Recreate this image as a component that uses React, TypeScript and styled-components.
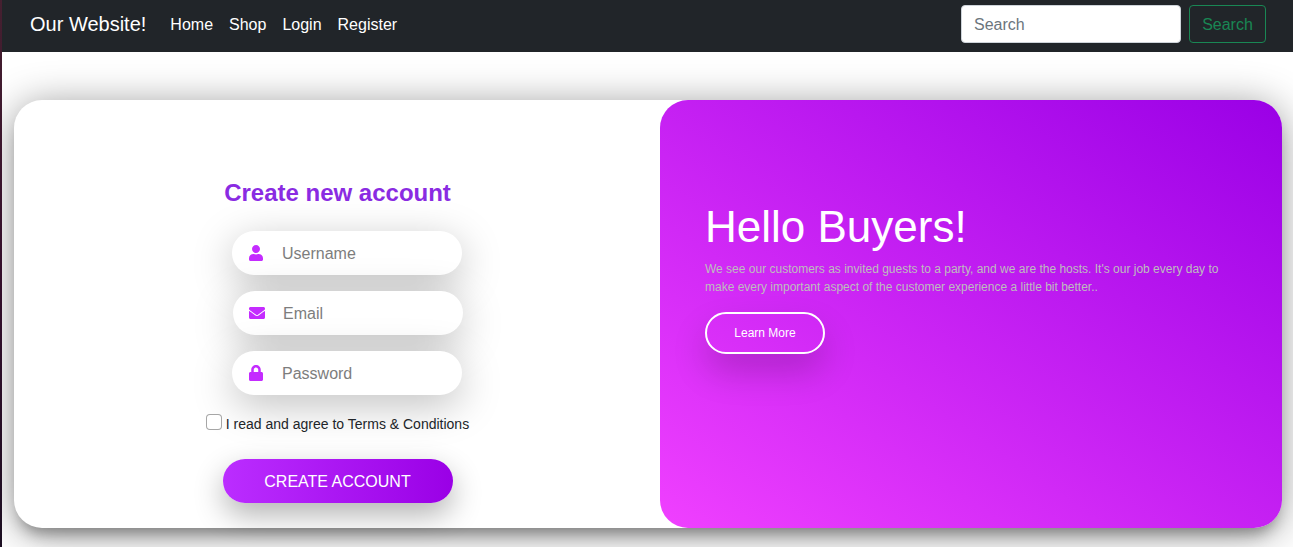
import React from 'react'
import styled, { createGlobalStyle } from 'styled-components'
import { FaEnvelope, FaLock, FaUser } from 'react-icons/fa'

const GlobalStyle = createGlobalStyle`
  html, body {
    margin: 0;
    padding: 0;
    height: 100%;
    overflow: hidden;
    background: linear-gradient(#452030, #34102c 50%, #1c0f22);
  }

  body {
    font-family: 'Liberation Sans', Arial, sans-serif;
    color: #212529;
  }

  * {
    box-sizing: border-box;
  }
`

const fields = [
  { icon: <FaUser />, placeholder: 'Username', type: 'text', shift: 0 },
  { icon: <FaEnvelope />, placeholder: 'Email', type: 'email', shift: 2 },
  { icon: <FaLock />, placeholder: 'Password', type: 'password', shift: 0 },
]

export default function App() {
  return (
    <Page>
      <GlobalStyle />
      <Navbar>
        <Brand href='#'>Our Website!</Brand>
        <NavLinks>
          <NavLink href='#'>Home</NavLink>
          <NavLink href='#'>Shop</NavLink>
          <NavLink href='#'>Login</NavLink>
          <NavLink href='#'>Register</NavLink>
        </NavLinks>
        <SearchForm>
          <SearchInput type='search' placeholder='Search' />
          <SearchButton type='button'>Search</SearchButton>
        </SearchForm>
      </Navbar>

      <Main>
        <Card>
          <FormPanel>
            <Title>Create new account</Title>
            <Fields>
              {fields.map(field => (
                <Field key={field.placeholder} $shift={field.shift}>
                  <FieldIcon>{field.icon}</FieldIcon>
                  <FieldInput type={field.type} placeholder={field.placeholder} />
                </Field>
              ))}
            </Fields>
            <Terms>
              <Checkbox type='checkbox' />
              <span>I read and agree to Terms &amp; Conditions</span>
            </Terms>
            <CreateButton type='button'>CREATE ACCOUNT</CreateButton>
          </FormPanel>

          <HeroPanel>
            <HeroTitle>Hello Buyers!</HeroTitle>
            <HeroText>
              We see our customers as invited guests to a party, and we are the hosts. It's our job every day to
              make every important aspect of the customer experience a little bit better..
            </HeroText>
            <LearnMore type='button'>Learn More</LearnMore>
          </HeroPanel>
        </Card>
      </Main>
    </Page>
  )
}

const Page = styled.div`
  margin-left: 2px;
  height: 547px;
  background: #fff;
  overflow: hidden;
`

const Navbar = styled.nav`
  display: flex;
  align-items: center;
  height: 52px;
  padding: 0 27px 2px 28px;
  background: #212529;
`

const Brand = styled.a`
  margin: 0 24px 2px 0;
  font-size: 20px;
  line-height: 30px;
  color: #fff;
  text-decoration: none;
`

const NavLinks = styled.div`
  display: flex;
  gap: 16px;
`

const NavLink = styled.a`
  font-size: 16px;
  line-height: 24px;
  color: #fff;
  text-decoration: none;
`

const SearchForm = styled.form`
  display: flex;
  gap: 8px;
  margin: 0 0 2px auto;
`

const SearchInput = styled.input`
  width: 220px;
  height: 38px;
  padding: 7px 12px 5px;
  font: 16px/24px 'Liberation Sans', Arial, sans-serif;
  background: #fff;
  border: 1px solid #ced4da;
  border-radius: 4px;
  outline: none;

  &::placeholder {
    color: #6c757d;
  }
`

const SearchButton = styled.button`
  width: 77px;
  height: 38px;
  padding: 2px 0 0;
  font: 16px/24px 'Liberation Sans', Arial, sans-serif;
  color: #198754;
  background: transparent;
  border: 1px solid #198754;
  border-radius: 4px;
`

const Main = styled.main`
  padding: 48px 11px 0 12px;
`

const Card = styled.section`
  display: flex;
  height: 428px;
  background: #fff;
  border-radius: 28px;
  box-shadow: 0 5px 40px rgba(0, 0, 0, 0.42), 0 12px 14px -6px rgba(0, 0, 0, 0.3);
`

const FormPanel = styled.div`
  display: flex;
  flex-direction: column;
  align-items: center;
  width: 646px;
  padding-top: 78px;
`

const Title = styled.h2`
  margin: 0 0 24px 1px;
  font-size: 24px;
  line-height: 29px;
  font-weight: 700;
  color: #8a2be2;
`

const Fields = styled.div`
  display: flex;
  flex-direction: column;
  align-items: center;
  gap: 16px;
  padding-left: 20px;
`

const Field = styled.label<{ $shift: number }>`
  display: flex;
  align-items: center;
  width: 230px;
  height: 44px;
  margin-left: ${props => props.$shift}px;
  padding-left: 15px;
  background: #fff;
  border-radius: 22px;
  box-shadow: 0 10px 40px rgba(0, 0, 0, 0.25);
`

const FieldIcon = styled.span`
  display: flex;
  justify-content: center;
  width: 18px;
  margin-right: 17px;
  font-size: 16px;
  color: #c42cff;
`

const FieldInput = styled.input`
  flex: 1;
  min-width: 0;
  padding: 2px 0 0;
  font: 16px/24px 'Liberation Sans', Arial, sans-serif;
  background: transparent;
  border: none;
  outline: none;

  &::placeholder {
    color: #7d7d7d;
  }
`

const Terms = styled.label`
  display: flex;
  align-items: flex-start;
  gap: 4px;
  margin: 19px 0 0 1px;
  font-size: 14px;
  line-height: 21px;
  color: #212529;
`

const Checkbox = styled.input`
  appearance: none;
  width: 16px;
  height: 16px;
  margin: 0;
  background: #fff;
  border: 1px solid rgba(0, 0, 0, 0.35);
  border-radius: 4px;
`

const CreateButton = styled.button`
  width: 230px;
  height: 44px;
  margin: 24px 0 0 2px;
  padding: 2px 1px 0 0;
  font: 16px/24px 'Liberation Sans', Arial, sans-serif;
  color: #fff;
  background: linear-gradient(to right, #bb2dff, #9a00e6);
  border: none;
  border-radius: 22px;
  box-shadow: 0 12px 30px rgba(0, 0, 0, 0.3);
`

const HeroPanel = styled.div`
  flex: 1;
  padding: 100px 45px 0;
  background: linear-gradient(to top right, #f040ff, #9a00e6);
  border-radius: 28px;
`

const HeroTitle = styled.h1`
  margin: 0 0 6px;
  font-size: 44px;
  line-height: 54px;
  font-weight: 400;
  color: #fff;
`

const HeroText = styled.p`
  margin: 0 0 16px;
  font-size: 12px;
  line-height: 18px;
  color: #bdbdbd;
`

const LearnMore = styled.button`
  display: block;
  width: 120px;
  height: 42px;
  padding: 0;
  font: 12px/18px 'Liberation Sans', Arial, sans-serif;
  color: #fff;
  background: transparent;
  border: 2px solid #fff;
  border-radius: 21px;
  box-shadow: 0 18px 35px rgba(0, 0, 0, 0.18);
`
